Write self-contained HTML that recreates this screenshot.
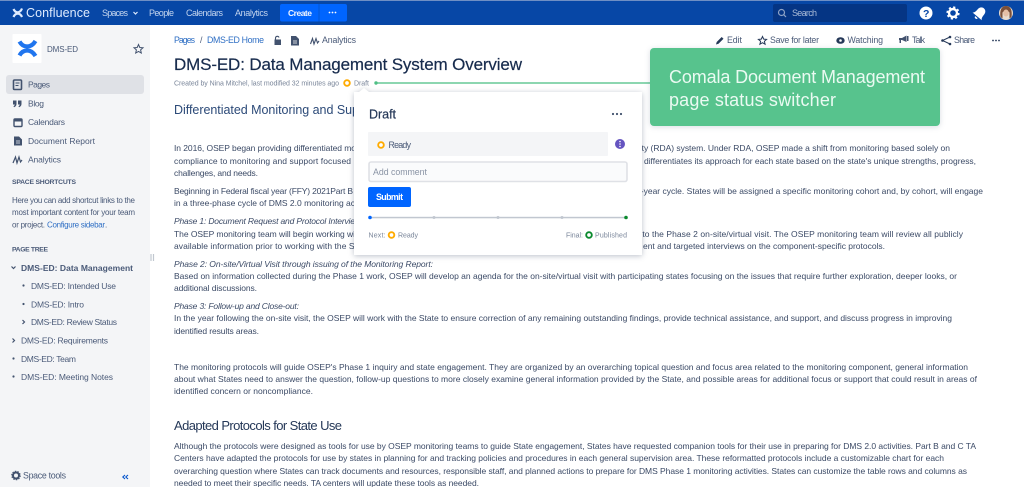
<!DOCTYPE html>
<html lang="en"><head><meta charset="utf-8"><title>DMS-ED: Data Management System Overview</title>
<style>
html,body{margin:0;padding:0;width:1024px;height:487px;overflow:hidden;background:#fff}
svg{display:block;filter:blur(.35px)}
text{font-family:"Liberation Sans",sans-serif;white-space:pre}
.b{font-size:8.5px;fill:#3b4a66}
.i{font-size:8.5px;fill:#3b4a66;font-style:italic}
.s{font-size:8.5px;fill:#4a5a78}
.n{font-size:9px;fill:#c4d5ee}
.a{font-size:8.8px;fill:#4a5a78}
.l{font-size:8.8px;fill:#2f6fc4}
.m{font-size:7px;fill:#7a869a}
.h{font-size:6.8px;fill:#4a5a78;font-weight:bold}
</style></head><body>
<svg width="1024" height="487" viewBox="0 0 1024 487" xmlns="http://www.w3.org/2000/svg">
<rect width="1024" height="487" fill="#fff"/>

<!-- sidebar -->
<rect x="0" y="25" width="150" height="462" fill="#f4f5f7"/>
<rect x="12.5" y="34" width="29" height="29" rx="1" fill="#fff"/>
<path d="M19.500 41.500C23 48 31 48.500 35.500 41M19.500 55.500C23 49 31 48.500 35.500 56" fill="none" stroke="#2075ee" stroke-width="4.200"/>
<text x="47" y="52" textLength="31" class="s" style="font-size:8px">DMS-ED</text>
<path d="M138.500 44.500l1.300 3 3.200.3-2.400 2.100.7 3.100-2.800-1.600-2.800 1.600.7-3.100-2.400-2.100 3.200-.3z" fill="none" stroke="#42526e" stroke-width="1"/>
<rect x="6" y="75" width="138" height="19" rx="3" fill="#dfe1e6"/>
<rect x="13.500" y="80" width="8" height="9.500" rx="1" fill="none" stroke="#42526e" stroke-width="1.600"/><path d="M15.500 83h4M15.500 85.500h3" stroke="#42526e"/>
<text x="28" y="87.500" textLength="22" class="s">Pages</text>
<path d="M13 100.500h3.500v3.500c0 1.500-1 2.800-2.500 3.200l-.5-1c.8-.4 1.200-1 1.200-1.700H13zM18 100.500h3.500v3.500c0 1.500-1 2.800-2.500 3.200l-.5-1c.8-.4 1.200-1 1.200-1.700H18z" fill="#42526e"/>
<text x="28" y="106.500" textLength="16" class="s">Blog</text>
<rect x="14" y="119" width="8" height="7.500" rx="1" fill="none" stroke="#42526e" stroke-width="1.400"/><path d="M14 120.500h8" stroke="#42526e" stroke-width="2"/>
<text x="28" y="125" textLength="37" class="s">Calendars</text>
<path d="M14 136.500h5l3 3v6h-8z" fill="#42526e"/><path d="M16 141h4M16 143h4" stroke="#f4f5f7" stroke-width=".8"/>
<text x="28" y="144" textLength="67" class="s">Document Report</text>
<path d="M13 163l2.500-6 1.500 6 2-6 1.500 5 1.500-2" fill="none" stroke="#42526e" stroke-width="1.200"/>
<text x="28" y="162.500" textLength="33" class="s">Analytics</text>
<text x="12" y="184" textLength="64" class="h">SPACE SHORTCUTS</text>
<text x="12" y="203" textLength="123" class="s" style="font-size:8px">Here you can add shortcut links to the</text>
<text x="12" y="215" textLength="123" class="s" style="font-size:8px">most important content for your team</text>
<text x="12" y="227.500" textLength="35" class="s" style="font-size:8px">or project. </text>
<text x="47" y="227.500" textLength="58" class="l" style="font-size:8px">Configure sidebar</text>
<text x="105" y="227.500" class="s" style="font-size:8px">.</text>
<text x="12" y="251.500" textLength="36" class="h">PAGE TREE</text>
<path d="M151 254v7M153.500 254v7" stroke="#c1c7d0" stroke-width="1.200"/>
<path d="M11.500 266.500l2 2 2-2" fill="none" stroke="#42526e" stroke-width="1.200"/>
<text x="21" y="271" textLength="112" class="s" style="font-weight:bold">DMS-ED: Data Management</text>
<circle cx="23.500" cy="285.500" r="1.100" fill="#42526e"/>
<text x="31" y="289" textLength="85" class="s">DMS-ED: Intended Use</text>
<circle cx="23.500" cy="304" r="1.100" fill="#42526e"/>
<text x="31" y="307.500" textLength="53" class="s">DMS-ED: Intro</text>
<path d="M22.500 320l2 2-2 2" fill="none" stroke="#42526e" stroke-width="1.200"/>
<text x="31" y="325" textLength="86" class="s">DMS-ED: Review Status</text>
<path d="M12.500 338.500l2 2-2 2" fill="none" stroke="#42526e" stroke-width="1.200"/>
<text x="21" y="343.500" textLength="87" class="s">DMS-ED: Requirements</text>
<circle cx="13.500" cy="358.500" r="1.100" fill="#42526e"/>
<text x="21" y="362" textLength="55" class="s">DMS-ED: Team</text>
<circle cx="13.500" cy="376.500" r="1.100" fill="#42526e"/>
<text x="21" y="380" textLength="92" class="s">DMS-ED: Meeting Notes</text>
<circle cx="16" cy="475.500" r="3" fill="none" stroke="#42526e" stroke-width="2"/><circle cx="16" cy="475.500" r="4.300" fill="none" stroke="#42526e" stroke-width="1" stroke-dasharray="1.500 1.200"/>
<text x="23" y="478.500" textLength="43" class="s" style="font-size:8.800px">Space tools</text>
<path d="M125 475l-2.200 2 2.200 2M128 475l-2.200 2 2.200 2" fill="none" stroke="#0052cc" stroke-width="1.100"/>

<!-- header -->
<rect width="1024" height="25" fill="#0747a6"/>
<rect width="1024" height="1" fill="#6f8fc4"/>
<path d="M13.500 9C15.500 13.500 20 13.500 22 8.500M13.500 17C15.500 12.500 20 12.500 22 17" fill="none" stroke="#deebff" stroke-width="2.200"/>
<text x="26" y="17" textLength="64" style="font-size:12.500px;fill:#deebff">Confluence</text>
<text x="102" y="16" textLength="26" class="n">Spaces</text>
<path d="M133.500 12l2 2 2-2" fill="none" stroke="#deebff" stroke-width="1.200"/>
<text x="149" y="16" textLength="25" class="n">People</text>
<text x="186" y="16" textLength="37" class="n">Calendars</text>
<text x="235" y="16" textLength="33" class="n">Analytics</text>
<rect x="280" y="4" width="67" height="17.500" rx="2" fill="#0065ff"/>
<rect x="318.500" y="4" width="1" height="17.500" fill="#0747a6" opacity=".5"/>
<text x="288" y="16" textLength="24" style="font-size:8.500px;font-weight:bold;fill:#f0f5ff">Create</text>
<circle cx="329.500" cy="12.500" r=".9" fill="#fff"/><circle cx="332.500" cy="12.500" r=".9" fill="#fff"/><circle cx="335.500" cy="12.500" r=".9" fill="#fff"/>
<rect x="773" y="4" width="134" height="18" rx="2" fill="#053584"/>
<circle cx="781.500" cy="12.500" r="3" fill="none" stroke="#8ea3c6" stroke-width="1.200"/><path d="M783.700 14.700l2.300 2.300" stroke="#8ea3c6" stroke-width="1.200"/>
<text x="792" y="16" textLength="25" style="font-size:9px;fill:#a9bad6">Search</text>
<circle cx="926" cy="13" r="6.500" fill="#fff"/>
<text x="923" y="16.800" style="font-size:10.500px;font-weight:bold;fill:#0747a6">?</text>
<circle cx="953" cy="13" r="4" fill="none" stroke="#fff" stroke-width="2.400"/><circle cx="953" cy="13" r="5.800" fill="none" stroke="#fff" stroke-width="1.600" stroke-dasharray="2.200 2.350"/>
<g transform="translate(980 13) rotate(40) scale(1.100)"><path d="M-5.500 4C-4 3-3.800 1-3.800-1-3.800-4-2-5.500 0-5.500S3.800-4 3.800-1C3.800 1 4 3 5.500 4Z" fill="#fff"/><path d="M-1.500 5h3a1.500 1.500 0 0 1-3 0z" fill="#fff"/></g>
<circle cx="1006" cy="13" r="7" fill="#e8dccf"/>
<path d="M1000.500 17c-1-7 1-11 5.500-11s6.500 4 5.500 11l-2 1.500v-6l-3.500-3-3.500 3v6z" fill="#7a4f38"/>
<ellipse cx="1006" cy="13" rx="2.800" ry="3.500" fill="#e5bfa5"/>

<!-- breadcrumbs -->
<text x="174" y="43" textLength="21" class="l">Pages</text>
<text x="200" y="43" class="a">/</text>
<text x="207" y="43" textLength="57" class="l">DMS-ED Home</text>
<rect x="274.500" y="39.500" width="6.500" height="5.500" fill="#42526e"/><path d="M275.500 39.500v-1.500a1.800 1.800 0 0 1 3.500-.5" fill="none" stroke="#42526e" stroke-width="1.100"/>
<path d="M291 36h5l3 3v6.500h-8z" fill="#42526e"/><path d="M293 41h4M293 43h4" stroke="#fff" stroke-width=".8"/>
<path d="M310.500 44l2-5.500 1.500 5.500 2-5.500 1.500 4.500 1.500-2" fill="none" stroke="#42526e" stroke-width="1.100"/>
<text x="322" y="43" textLength="34" class="a">Analytics</text>

<!-- page actions -->
<path d="M716 44.500l.7-2.500 5-5 1.800 1.800-5 5z" fill="#253858"/>
<text x="727" y="43" textLength="15" class="a">Edit</text>
<path d="M762.500 36.500l1.200 2.600 2.900.3-2.200 1.900.7 2.900-2.600-1.500-2.600 1.500.7-2.900-2.200-1.900 2.900-.3z" fill="none" stroke="#253858" stroke-width="1"/>
<text x="770" y="43" textLength="49" class="a">Save for later</text>
<ellipse cx="840.500" cy="40.500" rx="4.200" ry="3.300" fill="#253858"/><circle cx="840.500" cy="40.500" r="1.300" fill="#fff"/>
<text x="847.500" y="43" textLength="35.500" class="a">Watching</text>
<path d="M899 38h3l4.500-2.500v6.500l-4.500-2h-1v3h-1.500v-3H899z" fill="#42526e"/><rect x="907" y="36" width="1.500" height="5" fill="#42526e"/>
<text x="912" y="43" textLength="13" class="a">Talk</text>
<path d="M950 37l-7.500 3.500 7.500 3.500" fill="none" stroke="#253858" stroke-width="1"/><circle cx="950" cy="37" r="1.300" fill="#253858"/><circle cx="942.500" cy="40.500" r="1.300" fill="#253858"/><circle cx="950" cy="44" r="1.300" fill="#253858"/>
<text x="954" y="43" textLength="21" class="a">Share</text>
<circle cx="993" cy="40.500" r=".9" fill="#253858"/><circle cx="996" cy="40.500" r=".9" fill="#253858"/><circle cx="999" cy="40.500" r=".9" fill="#253858"/>

<!-- title -->
<text x="174" y="70" textLength="348" style="font-size:17px;fill:#172b4d;stroke:#172b4d;stroke-width:.2">DMS-ED: Data Management System Overview</text>
<text x="174" y="85.500" textLength="165" class="m">Created by Nina Mitchel, last modified 32 minutes ago</text>
<circle cx="347" cy="83" r="2.800" fill="#fff" stroke="#ffab00" stroke-width="1.900"/>
<text x="354" y="85.500" textLength="15" class="m">Draft</text>

<!-- body -->
<text x="174" y="114" textLength="185" style="font-size:12.500px;fill:#2c4a78">Differentiated Monitoring and Sup</text>
<text x="174" y="151" textLength="182" class="b">In 2016, OSEP began providing differentiated mo</text>
<text x="636" y="151" textLength="314" class="b">ility (RDA) system. Under RDA, OSEP made a shift from monitoring based solely on</text>
<text x="174" y="164" textLength="177" class="b">compliance to monitoring and support focused</text>
<text x="644" y="164" textLength="332" class="b">differentiates its approach for each state based on the state's unique strengths, progress,</text>
<text x="174" y="176" textLength="84" class="b">challenges, and needs.</text>
<text x="174" y="194" textLength="179" class="b">Beginning in Federal fiscal year (FFY) 2021Part B</text>
<text x="636" y="194" textLength="347" class="b">e-year cycle. States will be assigned a specific monitoring cohort and, by cohort, will engage</text>
<text x="174" y="206" textLength="181" class="b">in a three-phase cycle of DMS 2.0 monitoring ac</text>
<text x="174" y="224" textLength="181" class="i">Phase 1: Document Request and Protocol Intervie</text>
<text x="174" y="237" textLength="181" class="b">The OSEP monitoring team will begin working wi</text>
<text x="637" y="237" textLength="326" class="b">r to the Phase 2 on-site/virtual visit. The OSEP monitoring team will review all publicly</text>
<text x="174" y="249" textLength="183" class="b">available information prior to working with the St</text>
<text x="643" y="249" textLength="242" class="b">ent and targeted interviews on the component-specific protocols.</text>
<text x="174" y="267" textLength="259" class="i">Phase 2: On-site/Virtual Visit through issuing of the Monitoring Report:</text>
<text x="174" y="279" textLength="783" class="b">Based on information collected during the Phase 1 work, OSEP will develop an agenda for the on-site/virtual visit with participating states focusing on the issues that require further exploration, deeper looks, or</text>
<text x="174" y="291" textLength="83" class="b">additional discussions.</text>
<text x="174" y="309" textLength="125" class="i">Phase 3: Follow-up and Close-out:</text>
<text x="174" y="321" textLength="778" class="b">In the year following the on-site visit, the OSEP will work with the State to ensure correction of any remaining outstanding findings, provide technical assistance, and support, and discuss progress in improving</text>
<text x="174" y="334" textLength="85" class="b">identified results areas.</text>
<text x="174" y="370" textLength="794" class="b">The monitoring protocols will guide OSEP's Phase 1 inquiry and state engagement. They are organized by an overarching topical question and focus area related to the monitoring component, general information</text>
<text x="174" y="382" textLength="803" class="b">about what States need to answer the question, follow-up questions to more closely examine general information provided by the State, and possible areas for additional focus or support that could result in areas of</text>
<text x="174" y="394" textLength="139" class="b">identified concern or noncompliance.</text>
<text x="174" y="430" textLength="168" style="font-size:13px;fill:#253858">Adapted Protocols for State Use</text>
<text x="174" y="449" textLength="802" class="b">Although the protocols were designed as tools for use by OSEP monitoring teams to guide State engagement, States have requested companion tools for their use in preparing for DMS 2.0 activities. Part B and C TA</text>
<text x="174" y="461" textLength="770" class="b">Centers have adapted the protocols for use by states in planning for and tracking policies and procedures in each general supervision area. These reformatted protocols include a customizable chart for each</text>
<text x="174" y="474" textLength="793" class="b">overarching question where States can track documents and resources, responsible staff, and planned actions to prepare for DMS Phase 1 monitoring activities. States can customize the table rows and columns as</text>
<text x="174" y="486" textLength="305" class="b">needed to meet their specific needs. TA centers will update these tools as needed.</text>

<!-- callout line -->
<rect x="376" y="82.300" width="276" height="1.400" fill="#5bc48f"/>
<circle cx="376" cy="83" r="1.700" fill="#4fbf85"/>

<!-- popup -->
<g style="filter:drop-shadow(0 1px 3px rgba(9,30,66,.28))">
<path d="M354 92H359L364 88 369 92H642V255H354Z" fill="#fff"/>
</g>
<text x="369" y="118.500" textLength="27" style="font-size:12.500px;fill:#253858;stroke:#253858;stroke-width:.2">Draft</text>
<circle cx="613" cy="114" r="1.100" fill="#42526e"/><circle cx="617" cy="114" r="1.100" fill="#42526e"/><circle cx="621" cy="114" r="1.100" fill="#42526e"/>
<rect x="368" y="132" width="240" height="24" rx="1" fill="#f4f5f7"/>
<circle cx="381" cy="145" r="2.800" fill="#fff" stroke="#ffab00" stroke-width="1.900"/>
<text x="388.500" y="148" textLength="22.500" class="a">Ready</text>
<circle cx="620" cy="144" r="5" fill="#6554c0"/>
<circle cx="620" cy="141.500" r=".8" fill="#fff"/><circle cx="620" cy="144" r=".8" fill="#fff"/><circle cx="620" cy="146.500" r=".8" fill="#fff"/>
<rect x="369" y="162" width="258" height="19.500" rx="2" fill="#fafbfc" stroke="#dfe1e6" stroke-width="1.600"/>
<text x="373" y="175" textLength="54" style="font-size:8.800px;fill:#8993a4">Add comment</text>
<rect x="368" y="187" width="43" height="20" rx="2" fill="#0065ff"/>
<text x="376" y="200" textLength="27" style="font-size:8.800px;fill:#fff;font-weight:bold">Submit</text>
<rect x="370" y="216.800" width="256" height="1.500" fill="#c1c7d0"/>
<circle cx="370" cy="217.500" r="1.800" fill="#0065ff"/>
<circle cx="434" cy="217.500" r="1.500" fill="#c1c7d0"/><circle cx="498" cy="217.500" r="1.500" fill="#c1c7d0"/><circle cx="562" cy="217.500" r="1.500" fill="#c1c7d0"/>
<circle cx="626" cy="217.500" r="1.800" fill="#0b8a2e"/>
<text x="368.500" y="237.500" textLength="17" class="m">Next:</text>
<circle cx="391.500" cy="235" r="2.800" fill="#fff" stroke="#ffab00" stroke-width="1.900"/>
<text x="398" y="237.500" textLength="20" class="m">Ready</text>
<text x="566" y="237.500" textLength="17" class="m">Final:</text>
<circle cx="589" cy="235" r="2.800" fill="#fff" stroke="#0b8a2e" stroke-width="1.900"/>
<text x="595" y="237.500" textLength="32" class="m">Published</text>

<!-- green callout -->
<g style="filter:drop-shadow(0 1px 3px rgba(9,30,66,.15))"><rect x="650" y="48" width="290" height="78" rx="4" fill="#57c38d"/></g>
<text x="669" y="83" textLength="256" style="font-size:18px;fill:#eafaf2">Comala Document Management</text>
<text x="669" y="106" textLength="167" style="font-size:18px;fill:#eafaf2">page status switcher</text>
</svg>
</body></html>
